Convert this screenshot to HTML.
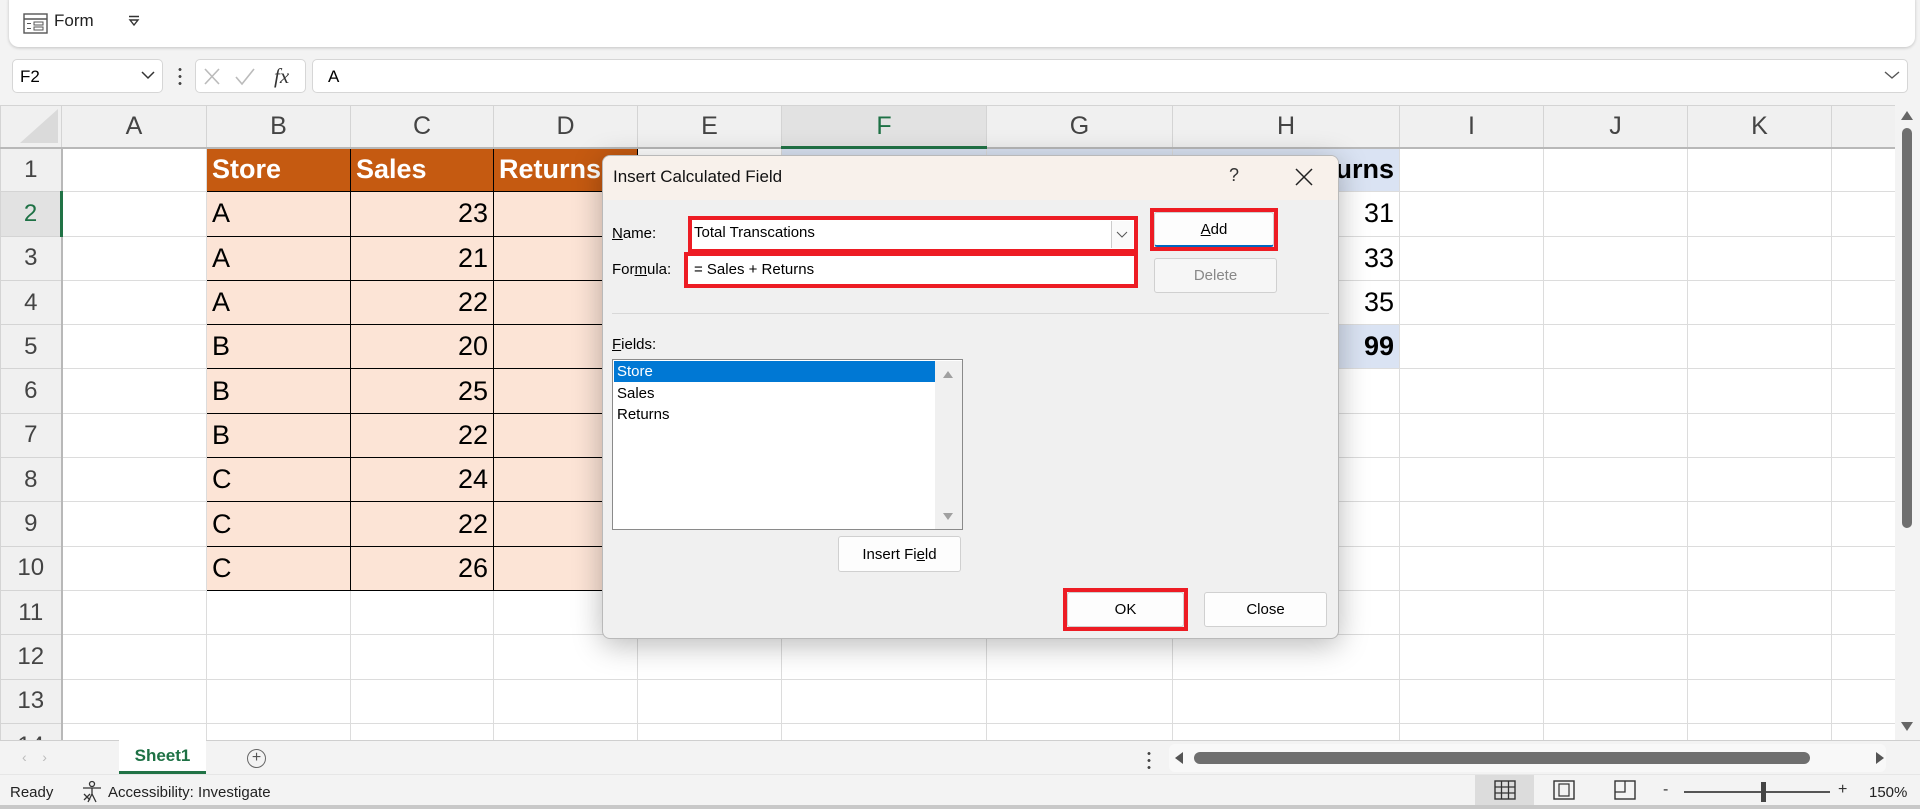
<!DOCTYPE html>
<html><head><meta charset="utf-8"><style>
*{box-sizing:border-box;margin:0;padding:0}
body{width:1920px;height:809px;overflow:hidden;background:#f3f3f3;font-family:"Liberation Sans",sans-serif;position:relative}
.abs{position:absolute}
table.g{position:absolute;left:0;top:105px;border-collapse:collapse;table-layout:fixed;width:1895px}
table.g td{border:1px solid #dcdcdc;height:44.3px;background:#fff;font-size:27px;padding:0 5px;white-space:nowrap;overflow:hidden;color:#000}
table.g tr.h td{height:42px;background:#f0f0f0;color:#444;text-align:center;font-size:25px;border-color:#d4d4d4;border-bottom:2px solid #b8b8b8}
table.g td.rh{background:#f0f0f0;color:#444;text-align:center;font-size:24px;border-color:#d4d4d4;border-right:2px solid #b8b8b8;padding:0}
table.g td.o{background:#c55a11;color:#fff;font-weight:bold;border:1px solid #000}
table.g td.p{background:#fce4d6;border:1px solid #000}
table.g td.r{text-align:right}
table.g td.b{background:#dae3f3}
.btn{position:absolute;background:#fdfdfd;border:1px solid #d0d0d0;border-radius:3px;font-size:15px;text-align:center;color:#000}
.red{position:absolute;border:4px solid #ed1c24}
.lbl{position:absolute;font-size:15px;color:#000}
</style></head><body>
<!-- ribbon -->
<div class="abs" style="left:9px;top:-10px;width:1906px;height:57px;background:#fff;border-radius:10px;box-shadow:0 1px 3px rgba(0,0,0,.2)"></div>
<svg class="abs" style="left:23px;top:13px" width="26" height="22" viewBox="0 0 26 22"><rect x="1" y="1" width="23" height="19" fill="none" stroke="#555" stroke-width="1.4"/><line x1="1" y1="6" x2="24" y2="6" stroke="#555" stroke-width="1.4"/><rect x="11" y="9" width="9" height="3" fill="none" stroke="#555"/><rect x="11" y="14" width="9" height="3" fill="none" stroke="#555"/><line x1="4" y1="10.5" x2="8" y2="10.5" stroke="#555"/><line x1="4" y1="15.5" x2="8" y2="15.5" stroke="#555"/></svg>
<div class="abs" style="left:54px;top:11px;font-size:17px;color:#222">Form</div>
<svg class="abs" style="left:128px;top:15px" width="12" height="12"><path d="M1 1.5H11M2 5L6 10L10 5Z" fill="none" stroke="#333" stroke-width="1.4"/></svg>
<!-- formula bar -->
<div class="abs" style="left:12px;top:59px;width:151px;height:34px;background:#fff;border:1px solid #d6d6d6;border-radius:5px"></div>
<div class="abs" style="left:20px;top:67px;font-size:17px">F2</div>
<svg class="abs" style="left:141px;top:71px" width="14" height="9"><path d="M1 1 L7 7 L13 1" fill="none" stroke="#333" stroke-width="1.5"/></svg>
<div class="abs" style="left:178px;top:66px;width:4px;height:20px;background:radial-gradient(circle,#444 1.3px,transparent 1.6px) 0 0/4px 7px"></div>
<div class="abs" style="left:195px;top:59px;width:111px;height:34px;background:#fff;border:1px solid #d6d6d6;border-radius:5px"></div>
<svg class="abs" style="left:202px;top:66px" width="100" height="22"><path d="M3 3 L17 18 M17 3 L3 18" stroke="#bbb" stroke-width="1.6"/><path d="M34 11 L40 18 L52 3" fill="none" stroke="#bbb" stroke-width="1.6"/><text x="72" y="17" font-family="Liberation Serif" font-style="italic" font-size="21" fill="#333">fx</text></svg>
<div class="abs" style="left:312px;top:59px;width:1596px;height:34px;background:#fff;border:1px solid #d6d6d6;border-radius:5px"></div>
<div class="abs" style="left:328px;top:67px;font-size:17px">A</div>
<svg class="abs" style="left:1884px;top:71px" width="16" height="9"><path d="M1 1 L8 7 L15 1" fill="none" stroke="#555" stroke-width="1.4"/></svg>
<!-- grid -->
<table class="g">
<colgroup><col style="width:61px"><col style="width:145px"><col style="width:144px"><col style="width:143px"><col style="width:144px"><col style="width:144px"><col style="width:205px"><col style="width:186px"><col style="width:227px"><col style="width:144px"><col style="width:144px"><col style="width:144px"><col style="width:64px"></colgroup>
<tr class="h"><td style="background:#f0f0f0"></td><td>A</td><td>B</td><td>C</td><td>D</td><td>E</td><td style="background:#e2e2e2;color:#1e7145;border-bottom:3px solid #217346">F</td><td>G</td><td>H</td><td>I</td><td>J</td><td>K</td><td></td></tr>
<tr><td class="rh">1</td><td></td><td class="o">Store</td><td class="o">Sales</td><td class="o">Returns</td><td></td><td class="b"></td><td class="b"></td><td class="b r" style="font-weight:bold">Sum of Returns</td><td></td><td></td><td></td><td></td></tr>
<tr><td class="rh" style="background:#e2e2e2;color:#1e7145;border-right:3px solid #217346">2</td><td></td><td class="p">A</td><td class="p r">23</td><td class="p r">10</td><td></td><td></td><td></td><td class="r">31</td><td></td><td></td><td></td><td></td></tr>
<tr><td class="rh">3</td><td></td><td class="p">A</td><td class="p r">21</td><td class="p r">12</td><td></td><td></td><td></td><td class="r">33</td><td></td><td></td><td></td><td></td></tr>
<tr><td class="rh">4</td><td></td><td class="p">A</td><td class="p r">22</td><td class="p r">11</td><td></td><td></td><td></td><td class="r">35</td><td></td><td></td><td></td><td></td></tr>
<tr><td class="rh">5</td><td></td><td class="p">B</td><td class="p r">20</td><td class="p r">12</td><td></td><td class="b"></td><td class="b"></td><td class="b r" style="font-weight:bold">99</td><td></td><td></td><td></td><td></td></tr>
<tr><td class="rh">6</td><td></td><td class="p">B</td><td class="p r">25</td><td class="p r">10</td><td></td><td></td><td></td><td></td><td></td><td></td><td></td><td></td></tr>
<tr><td class="rh">7</td><td></td><td class="p">B</td><td class="p r">22</td><td class="p r">11</td><td></td><td></td><td></td><td></td><td></td><td></td><td></td><td></td></tr>
<tr><td class="rh">8</td><td></td><td class="p">C</td><td class="p r">24</td><td class="p r">12</td><td></td><td></td><td></td><td></td><td></td><td></td><td></td><td></td></tr>
<tr><td class="rh">9</td><td></td><td class="p">C</td><td class="p r">22</td><td class="p r">11</td><td></td><td></td><td></td><td></td><td></td><td></td><td></td><td></td></tr>
<tr><td class="rh">10</td><td></td><td class="p">C</td><td class="p r">26</td><td class="p r">12</td><td></td><td></td><td></td><td></td><td></td><td></td><td></td><td></td></tr>
<tr><td class="rh">11</td><td></td><td></td><td></td><td></td><td></td><td></td><td></td><td></td><td></td><td></td><td></td><td></td></tr>
<tr><td class="rh">12</td><td></td><td></td><td></td><td></td><td></td><td></td><td></td><td></td><td></td><td></td><td></td><td></td></tr>
<tr><td class="rh">13</td><td></td><td></td><td></td><td></td><td></td><td></td><td></td><td></td><td></td><td></td><td></td><td></td></tr>
<tr><td class="rh">14</td><td></td><td></td><td></td><td></td><td></td><td></td><td></td><td></td><td></td><td></td><td></td><td></td></tr>
</table>
<div class="abs" style="left:20px;top:109px;width:0;height:0;border-left:38px solid transparent;border-bottom:34px solid #dadada"></div>
<!-- vertical scrollbar -->
<div class="abs" style="left:1895px;top:105px;width:25px;height:635px;background:#f3f3f3"></div>
<div class="abs" style="left:1901px;top:111px;width:0;height:0;border-left:6px solid transparent;border-right:6px solid transparent;border-bottom:9px solid #666"></div>
<div class="abs" style="left:1902px;top:128px;width:10px;height:400px;background:#6f6f6f;border-radius:5px"></div>
<div class="abs" style="left:1901px;top:722px;width:0;height:0;border-left:6px solid transparent;border-right:6px solid transparent;border-top:9px solid #666"></div>
<!-- sheet tabs -->
<div class="abs" style="left:0;top:740px;width:1920px;height:34px;background:#f3f3f3;border-top:1px solid #cfcfcf"></div>
<div class="abs" style="left:22px;top:749px;font-size:14px;color:#bbb">&#8249;&nbsp;&nbsp;&nbsp;&nbsp;&#8250;</div>
<div class="abs" style="left:119px;top:740px;width:87px;height:34px;background:#fff;border-bottom:3px solid #217346;text-align:center;font-size:17px;font-weight:bold;color:#1e7145;padding-top:6px">Sheet1</div>
<div class="abs" style="left:247px;top:749px;width:19px;height:19px;border:1.3px solid #666;border-radius:50%;text-align:center;line-height:16px;font-size:16px;color:#555">+</div>
<div class="abs" style="left:1147px;top:750px;width:4px;height:20px;background:radial-gradient(circle,#444 1.3px,transparent 1.6px) 0 0/4px 7px"></div>
<div class="abs" style="left:1169px;top:744px;width:717px;height:28px;background:#f8f8f8;border-radius:6px"></div>
<div class="abs" style="left:1175px;top:752px;width:0;height:0;border-top:6px solid transparent;border-bottom:6px solid transparent;border-right:8px solid #555"></div>
<div class="abs" style="left:1194px;top:752px;width:616px;height:12px;background:#6f6f6f;border-radius:6px"></div>
<div class="abs" style="left:1876px;top:752px;width:0;height:0;border-top:6px solid transparent;border-bottom:6px solid transparent;border-left:8px solid #555"></div>
<!-- status bar -->
<div class="abs" style="left:0;top:774px;width:1920px;height:35px;background:#f3f3f3;border-top:1px solid #e6e6e6;border-bottom:4px solid #c8c8c8"></div>
<div class="abs" style="left:10px;top:784px;font-size:15px;color:#222">Ready</div>
<svg class="abs" style="left:80px;top:780px" width="24" height="24"><circle cx="12" cy="4" r="2.5" fill="none" stroke="#333" stroke-width="1.3"/><path d="M3 8 L21 8 M12 8 L12 14 M8 22 L12 14 L16 22 M4 14 L10 20 M10 14 L4 20" fill="none" stroke="#333" stroke-width="1.3"/></svg>
<div class="abs" style="left:108px;top:784px;font-size:15px;color:#222">Accessibility: Investigate</div>
<div class="abs" style="left:1475px;top:775px;width:59px;height:30px;background:#dcdcdc"></div>
<svg class="abs" style="left:1494px;top:780px" width="22" height="20"><rect x="1" y="1" width="20" height="18" fill="none" stroke="#333" stroke-width="1.4"/><path d="M1 7H21M1 13H21M7.5 1V19M14.5 1V19" stroke="#333" stroke-width="1.3"/></svg>
<svg class="abs" style="left:1553px;top:780px" width="22" height="20"><rect x="1" y="1" width="20" height="18" fill="none" stroke="#333" stroke-width="1.4"/><rect x="6" y="4" width="10" height="12" fill="none" stroke="#333" stroke-width="1.2"/></svg>
<svg class="abs" style="left:1614px;top:780px" width="22" height="20"><rect x="1" y="1" width="20" height="18" fill="none" stroke="#333" stroke-width="1.4"/><path d="M11 1V12H1" fill="none" stroke="#333" stroke-width="1.3"/></svg>
<div class="abs" style="left:1663px;top:781px;font-size:16px;color:#333">-</div>
<div class="abs" style="left:1684px;top:791px;width:146px;height:2px;background:#555"></div>
<div class="abs" style="left:1761px;top:782px;width:5px;height:20px;background:#444"></div>
<div class="abs" style="left:1838px;top:781px;font-size:16px;color:#333">+</div>
<div class="abs" style="left:1869px;top:784px;font-size:15px;color:#222">150%</div>
<!-- dialog -->
<div class="abs" style="left:602px;top:155px;width:737px;height:484px;background:#f0f0f0;border:1px solid #b9b9b9;border-radius:8px;box-shadow:0 6px 30px rgba(0,0,0,.28);overflow:hidden">
  <div style="height:44px;background:#f8f1eb"></div>
</div>
<div class="abs" style="left:613px;top:167px;font-size:17px;color:#111">Insert Calculated Field</div>
<div class="abs" style="left:1229px;top:165px;font-size:18px;color:#333">?</div>
<svg class="abs" style="left:1295px;top:168px" width="18" height="18"><path d="M1 1L17 17M17 1L1 17" stroke="#222" stroke-width="1.5"/></svg>
<div class="lbl" style="left:612px;top:225px"><u>N</u>ame:</div>
<div class="lbl" style="left:612px;top:261px">For<u>m</u>ula:</div>
<div class="abs" style="left:688px;top:216px;width:450px;height:37px;background:#fff"></div>
<div class="abs" style="left:1111px;top:221px;width:22px;height:27px;background:#fafafa;border-left:1px solid #ccc"></div>
<svg class="abs" style="left:1116px;top:231px" width="12" height="8"><path d="M1 1L6 6L11 1" fill="none" stroke="#555"/></svg>
<div class="red" style="left:688px;top:216px;width:450px;height:37px"></div>
<div class="lbl" style="left:694px;top:224px">Total Transcations</div>
<div class="abs" style="left:684px;top:252px;width:454px;height:36px;background:#fff"></div>
<div class="red" style="left:684px;top:252px;width:454px;height:36px"></div>
<div class="lbl" style="left:694px;top:261px">= Sales + Returns</div>
<div class="btn" style="left:1154px;top:212px;width:120px;height:35px;border-bottom:2px solid #0067c0;padding-top:8px"><u>A</u>dd</div>
<div class="red" style="left:1150px;top:208px;width:128px;height:43px"></div>
<div class="btn" style="left:1154px;top:258px;width:123px;height:35px;color:#888;padding-top:8px;background:#f6f6f6">Delete</div>
<div class="abs" style="left:612px;top:313px;width:717px;height:1px;background:#d8d8d8"></div>
<div class="lbl" style="left:612px;top:336px"><u>F</u>ields:</div>
<div class="abs" style="left:612px;top:359px;width:351px;height:171px;background:#fff;border:1px solid #8a8a8a"></div>
<div class="abs" style="left:614px;top:361px;width:321px;height:21px;background:#0078d4"></div>
<div class="abs" style="left:935px;top:361px;width:27px;height:168px;background:#f0f0f0"></div>
<div class="abs" style="left:943px;top:371px;border-left:5px solid transparent;border-right:5px solid transparent;border-bottom:7px solid #a0a0a0"></div>
<div class="abs" style="left:943px;top:513px;border-left:5px solid transparent;border-right:5px solid transparent;border-top:7px solid #a0a0a0"></div>
<div class="lbl" style="left:617px;top:363px;color:#fff">Store</div>
<div class="lbl" style="left:617px;top:385px">Sales</div>
<div class="lbl" style="left:617px;top:406px">Returns</div>
<div class="btn" style="left:838px;top:536px;width:123px;height:36px;padding-top:9px">Insert Fi<u>e</u>ld</div>
<div class="btn" style="left:1067px;top:592px;width:117px;height:35px;padding-top:8px">OK</div>
<div class="red" style="left:1063px;top:588px;width:125px;height:43px"></div>
<div class="btn" style="left:1204px;top:592px;width:123px;height:35px;padding-top:8px">Close</div>
</body></html>
